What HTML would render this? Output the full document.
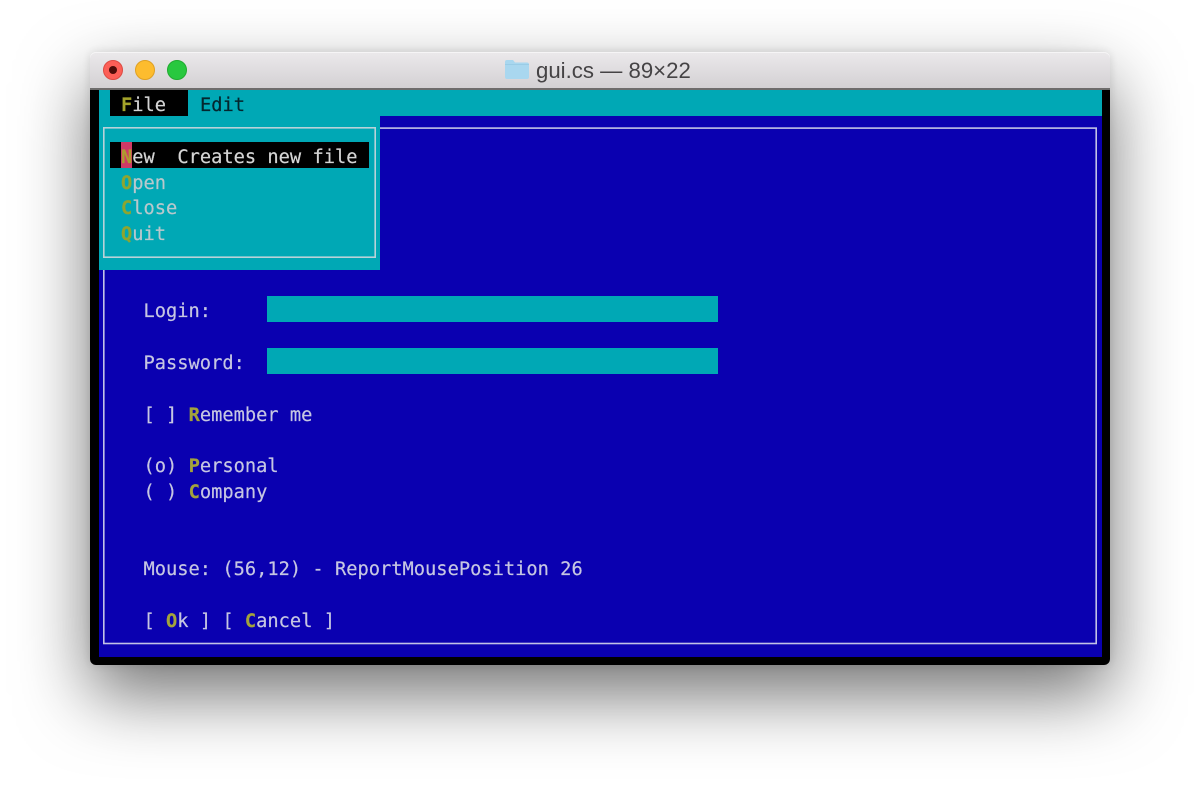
<!DOCTYPE html>
<html>
<head>
<meta charset="utf-8">
<style>
html,body{margin:0;padding:0;background:#fff;width:1200px;height:794px;overflow:hidden}
#p{position:absolute;left:0;top:0;width:1200px;height:794px;filter:blur(.3px)}
.win{position:absolute;left:90px;top:52px;width:1020px;height:613px;border-radius:6px;box-shadow:0 30px 70px 0 rgba(0,0,0,.55),0 0 10px rgba(0,0,0,.12)}
.title{position:absolute;left:90px;top:52px;width:1020px;height:36px;border-radius:6px 6px 0 0;background:linear-gradient(#ebe9eb,#d3d0d3);box-shadow:inset 0 1px 0 #f6f5f6}
.tline{position:absolute;left:90px;top:88px;width:1020px;height:2px;background:#6e6c6c}
.term{position:absolute;left:90px;top:90px;width:1020px;height:575px;background:#000;border-radius:0 0 6px 6px}
.abs{position:absolute}
.dot{position:absolute;width:18px;height:18px;border-radius:50%;top:60px}
.ttext{position:absolute;left:536px;top:56.5px;font:22.2px/28px "Liberation Sans",sans-serif;color:#454345;white-space:pre}
.r{position:absolute;font-family:"DejaVu Sans Mono","Liberation Mono",monospace;font-size:18.7px;line-height:25.75px;height:25.75px;white-space:pre;color:#c6c6e2;letter-spacing:0.011px;-webkit-text-stroke:.2px currentColor}
.y{color:#a3a33c;font-weight:bold}
.m{color:#b9c8cc}
.my{color:#8ea530;font-weight:bold}
</style>
</head>
<body>
<div id="p">
<div class="win"></div>
<div class="title"></div>
<div class="tline"></div>
<div class="dot" style="left:103px;background:#fc5f57;border:1px solid #dd4a42"></div>
<div class="dot" style="left:108.5px;top:65.5px;width:8px;height:8px;background:#4d0c08"></div>
<div class="dot" style="left:135px;background:#fdbc2e;border:1px solid #dfa023"></div>
<div class="dot" style="left:167px;background:#28c83f;border:1px solid #20ab30"></div>
<svg class="abs" style="left:504px;top:58px" width="26" height="22" viewBox="0 0 26 22"><path d="M1 4q0-2 2-2h6l2 2.5h12q2 0 2 2V19q0 2-2 2H3q-2 0-2-2z" fill="#a9d7ef"/><path d="M1 6.5h24" stroke="#9accE6" stroke-width="1"/></svg>
<div class="ttext">gui.cs — 89×22</div>

<div class="term"></div>
<div class="abs" style="left:98.5px;top:90px;width:1003.5px;height:567px;background:#0a00b0"></div>
<div class="abs" style="left:98.5px;top:90px;width:1003.5px;height:26px;background:#00a8b5"></div>
<svg class="abs" style="left:0;top:0" width="1200" height="794"><rect x="103.8" y="128.1" width="992.4" height="515.4" fill="none" stroke="#c2c2e6" stroke-width="1.6"/></svg>

<div class="abs" style="left:267px;top:296px;width:451px;height:26px;background:#00a8b5"></div>
<div class="abs" style="left:267px;top:348px;width:451px;height:26px;background:#00a8b5"></div>

<div class="r" style="left:143.5px;top:299px">Login:</div>
<div class="r" style="left:143.5px;top:351px">Password:</div>
<div class="r" style="left:143.5px;top:402.5px">[ ] <span class="y">R</span>emember me</div>
<div class="r" style="left:143.5px;top:454px">(o) <span class="y">P</span>ersonal</div>
<div class="r" style="left:143.5px;top:480px">( ) <span class="y">C</span>ompany</div>
<div class="r" style="left:143.5px;top:557px">Mouse: (56,12) - ReportMousePosition 26</div>
<div class="r" style="left:143.5px;top:609px">[ <span class="y">O</span>k ] [ <span class="y">C</span>ancel ]</div>

<div class="abs" style="left:98.5px;top:116px;width:281.5px;height:154px;background:#00a8b5"></div>
<svg class="abs" style="left:0;top:0" width="1200" height="794"><rect x="103.8" y="127.8" width="271.4" height="129.4" fill="none" stroke="#b9d2d8" stroke-width="1.6"/></svg>
<div class="abs" style="left:110px;top:90px;width:78px;height:26px;background:#000"></div>
<div class="abs" style="left:110px;top:141.5px;width:259px;height:26px;background:#000"></div>
<div class="abs" style="left:121px;top:141.5px;width:11px;height:26px;background:#d13a66"></div>

<div class="r" style="left:121px;top:93px;color:#d4d4d4"><span style="color:#a3a32a;font-weight:bold">F</span>ile</div>
<div class="r" style="left:200px;top:93px;color:#04262e">Edit</div>
<div class="r" style="left:121px;top:144.5px;color:#d4d4d4"><span style="color:#b09a30;font-weight:bold">N</span>ew  Creates new file</div>
<div class="r m" style="left:121px;top:170.5px"><span class="my">O</span>pen</div>
<div class="r m" style="left:121px;top:196px"><span class="my">C</span>lose</div>
<div class="r m" style="left:121px;top:222px"><span class="my">Q</span>uit</div>
</div>
</body>
</html>
